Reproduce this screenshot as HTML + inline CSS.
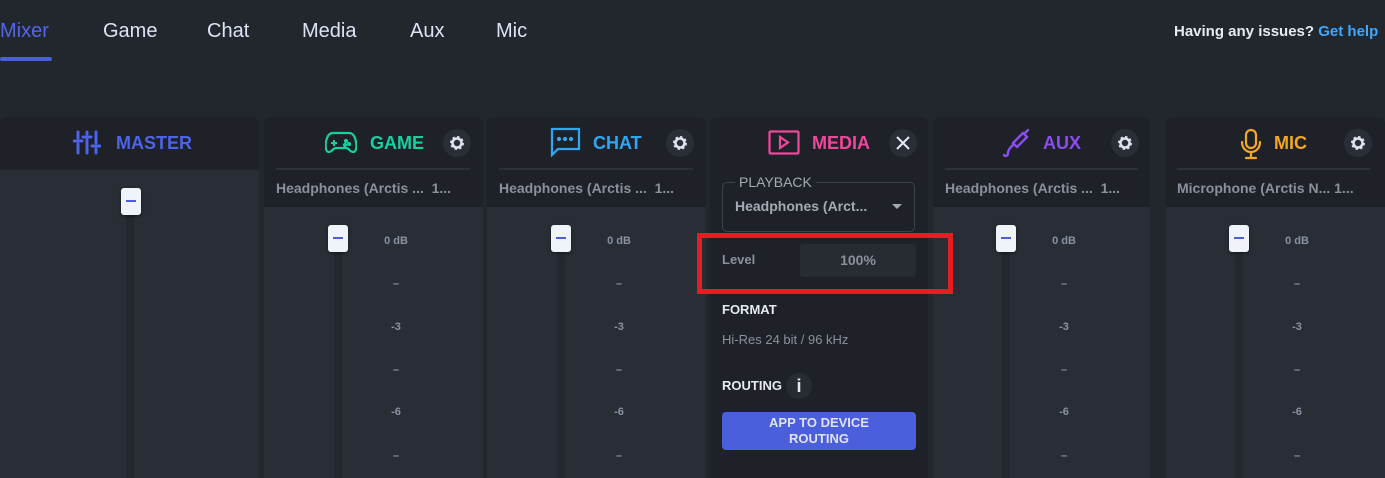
<!DOCTYPE html>
<html><head><style>
*{margin:0;padding:0;box-sizing:border-box}
body{width:1385px;height:478px;background:#22272e;font-family:"Liberation Sans",sans-serif;position:relative;overflow:hidden;color:#dfe3ee}
.a{position:absolute}
.nav{top:20px;font-size:20px;color:#dde3f5}
.hdr{background:#1e2228;border-radius:6px 6px 0 0}
.body{background:#292e36}
.title{font-weight:bold;font-size:18px}
.gear{width:28px;height:28px;border-radius:50%;background:#2a2f37;display:flex;align-items:center;justify-content:center}
.sep{height:2px;background:#2c3139}
.dev{font-weight:bold;font-size:14px;color:#8a909c;white-space:nowrap}
.track{width:8px;background:#23272e}
.thumb{width:20px;height:27px;background:#f1f3fa;border-radius:3px;box-shadow:0 1px 3px rgba(0,0,0,.5)}
.thumb:after{content:"";position:absolute;left:5px;top:12px;width:10px;height:2px;background:#4a5fdc}
.db{font-size:11px;color:#8a92a2;font-weight:bold;width:40px;text-align:center}
</style></head><body>
<div class="a nav" style="left:0;color:#5266e8">Mixer</div>
<div class="a" style="left:0;top:57px;width:52px;height:4px;background:#4a5fdc;border-radius:2px"></div>
<div class="a nav" style="left:103px">Game</div>
<div class="a nav" style="left:207px">Chat</div>
<div class="a nav" style="left:302px">Media</div>
<div class="a nav" style="left:410px">Aux</div>
<div class="a nav" style="left:496px">Mic</div>
<div class="a" style="left:1174px;top:23px;font-size:15px;font-weight:bold;color:#e6e9f2">Having any issues? <span style="color:#3ea7ff">Get help</span></div>

<!-- MASTER -->
<div class="a hdr" style="left:0;top:117px;width:259px;height:54px"></div>
<div class="a body" style="left:0;top:170px;width:259px;height:308px"></div>
<svg class="a" style="left:73px;top:129px" width="28" height="28" viewBox="0 0 28 28" stroke="#4d63e8" stroke-width="3" stroke-linecap="round"><path d="M5 3v6M1 12h8M5 15v9M14 3v2M10 8h8M14 11v13M23 3v11M19 17h8M23 20v4"/></svg>
<div class="a title" style="left:116px;top:133px;color:#4d63e8">MASTER</div>
<div class="a track" style="left:126px;top:214px;height:264px"></div>
<div class="a thumb" style="left:121px;top:188px"></div>

<!-- GAME -->
<div class="a hdr" style="left:264px;top:117px;width:219px;height:91px"></div>
<div class="a body" style="left:264px;top:207px;width:219px;height:271px"></div>
<svg class="a" style="left:325px;top:131px" width="32" height="24" viewBox="0 0 32 24" fill="none" stroke="#14d2a0" stroke-width="2.2"><path d="M8 2h16c4 0 6 3 7 9s0 10-3 10c-3 0-4-4-7-4h-10c-3 0-4 4-7 4s-4-4-3-10S4 2 8 2z"/><path d="M9 9v6M6 12h6" stroke-width="2"/><circle cx="21" cy="10" r="1" fill="#14d2a0"/><circle cx="24" cy="13" r="1" fill="#14d2a0"/><circle cx="20" cy="14" r="1" fill="#14d2a0"/></svg>
<div class="a title" style="left:370px;top:133px;color:#14d2a0">GAME</div>
<div class="a gear" style="left:443px;top:129px"><svg width="16" height="16" viewBox="0 0 16 16"><circle cx="8" cy="8" r="5.5" fill="none" stroke="#dfe3ee" stroke-width="3" stroke-dasharray="2.2 2.1"/><circle cx="8" cy="8" r="4.5" fill="none" stroke="#dfe3ee" stroke-width="2.5"/></svg></div>
<div class="a sep" style="left:276px;top:168px;width:194px"></div>
<div class="a dev" style="left:276px;top:180px">Headphones (Arctis ...&nbsp;&nbsp;1...</div>

<!-- CHAT -->
<div class="a hdr" style="left:487px;top:117px;width:219px;height:91px"></div>
<div class="a body" style="left:487px;top:207px;width:219px;height:271px"></div>
<svg class="a" style="left:549px;top:127px" width="32" height="30" viewBox="0 0 32 30" fill="none" stroke="#2ea8f5" stroke-width="2.2"><path d="M2 2h28v20H9l-6 6V2z"/><circle cx="10" cy="12" r="1" fill="#2ea8f5"/><circle cx="16" cy="12" r="1" fill="#2ea8f5"/><circle cx="22" cy="12" r="1" fill="#2ea8f5"/></svg>
<div class="a title" style="left:593px;top:133px;color:#2ea8f5">CHAT</div>
<div class="a gear" style="left:666px;top:129px"><svg width="16" height="16" viewBox="0 0 16 16"><circle cx="8" cy="8" r="5.5" fill="none" stroke="#dfe3ee" stroke-width="3" stroke-dasharray="2.2 2.1"/><circle cx="8" cy="8" r="4.5" fill="none" stroke="#dfe3ee" stroke-width="2.5"/></svg></div>
<div class="a sep" style="left:499px;top:168px;width:194px"></div>
<div class="a dev" style="left:499px;top:180px">Headphones (Arctis ...&nbsp;&nbsp;1...</div>

<!-- MEDIA -->
<div class="a hdr" style="left:710px;top:117px;width:218px;height:361px"></div>
<svg class="a" style="left:768px;top:130px" width="32" height="26" viewBox="0 0 32 26" fill="none" stroke="#f0479a" stroke-width="2.2"><rect x="1.5" y="1.5" width="29" height="22" rx="1"/><path d="M12 7v11l8-5.5z"/></svg>
<div class="a title" style="left:812px;top:133px;color:#f0479a">MEDIA</div>
<div class="a gear" style="left:889px;top:129px"><svg width="14" height="14" viewBox="0 0 14 14" stroke="#e6e9f2" stroke-width="2"><path d="M1 1l12 12M13 1L1 13"/></svg></div>
<div class="a" style="left:722px;top:182px;width:193px;height:50px;border:1px solid #3c424c;border-radius:5px"></div>
<div class="a" style="left:735px;top:174px;padding:0 4px;background:#1e2228;font-size:14px;color:#a4aab5">PLAYBACK</div>
<div class="a" style="left:735px;top:198px;font-size:14px;font-weight:bold;color:#a4aab5">Headphones (Arct...</div>
<div class="a" style="left:892px;top:204px;border-left:5px solid transparent;border-right:5px solid transparent;border-top:5px solid #a4aab5"></div>
<div class="a" style="left:722px;top:252px;font-size:13px;color:#8a909c;font-weight:bold">Level</div>
<div class="a" style="left:800px;top:244px;width:116px;height:33px;background:#272b32;border-radius:3px;text-align:center;line-height:33px;font-size:14px;font-weight:bold;color:#8a909c">100%</div>
<div class="a" style="left:722px;top:302px;font-size:13px;font-weight:bold;color:#e6e9f2">FORMAT</div>
<div class="a" style="left:722px;top:332px;font-size:13px;color:#8a909c">Hi-Res 24 bit / 96 kHz</div>
<div class="a" style="left:722px;top:378px;font-size:13px;font-weight:bold;color:#e6e9f2">ROUTING</div>
<div class="a" style="left:786px;top:373px;width:26px;height:26px;border-radius:50%;background:#272b32;color:#e6e9f2;font-weight:bold;font-size:18px;text-align:center;line-height:26px">i</div>
<div class="a" style="left:722px;top:412px;width:194px;height:38px;background:#4b5fdc;border-radius:4px;color:#dfe3f5;font-size:13px;font-weight:bold;text-align:center;line-height:16px;padding-top:3px">APP TO DEVICE<br>ROUTING</div>

<!-- AUX -->
<div class="a hdr" style="left:933px;top:117px;width:217px;height:91px"></div>
<div class="a body" style="left:933px;top:207px;width:217px;height:271px"></div>
<svg class="a" style="left:1002px;top:127px" width="30" height="32" viewBox="0 0 30 32" fill="none" stroke="#8b4cf0" stroke-width="2.4" stroke-linecap="round"><path d="M26 3l-4 4M22 7l3 3-10 10-4-4 10-10zM11 18c-3 3-5 5-5 8s-3 4-4 2"/></svg>
<div class="a title" style="left:1043px;top:133px;color:#8b4cf0">AUX</div>
<div class="a gear" style="left:1111px;top:129px"><svg width="16" height="16" viewBox="0 0 16 16"><circle cx="8" cy="8" r="5.5" fill="none" stroke="#dfe3ee" stroke-width="3" stroke-dasharray="2.2 2.1"/><circle cx="8" cy="8" r="4.5" fill="none" stroke="#dfe3ee" stroke-width="2.5"/></svg></div>
<div class="a sep" style="left:945px;top:168px;width:193px"></div>
<div class="a dev" style="left:945px;top:180px">Headphones (Arctis ...&nbsp;&nbsp;1...</div>

<!-- MIC -->
<div class="a hdr" style="left:1166px;top:117px;width:219px;height:91px"></div>
<div class="a body" style="left:1166px;top:207px;width:219px;height:271px"></div>
<svg class="a" style="left:1240px;top:128px" width="22" height="32" viewBox="0 0 22 32" fill="none" stroke="#f5a623" stroke-width="2.2" stroke-linecap="round"><rect x="6" y="2" width="10" height="18" rx="5"/><path d="M2 14c0 6 4 10 9 10s9-4 9-10M11 24v6M6 30h10"/></svg>
<div class="a title" style="left:1274px;top:133px;color:#f5a623">MIC</div>
<div class="a gear" style="left:1344px;top:129px"><svg width="16" height="16" viewBox="0 0 16 16"><circle cx="8" cy="8" r="5.5" fill="none" stroke="#dfe3ee" stroke-width="3" stroke-dasharray="2.2 2.1"/><circle cx="8" cy="8" r="4.5" fill="none" stroke="#dfe3ee" stroke-width="2.5"/></svg></div>
<div class="a sep" style="left:1177px;top:168px;width:194px"></div>
<div class="a dev" style="left:1177px;top:180px">Microphone (Arctis N... 1...</div>

<!-- red highlight on top -->
<div class="a" style="left:697px;top:233px;width:256px;height:61px;border:5px solid #e41e24;z-index:5"></div>

<!-- sliders -->
<div class="a track" style="left:334px;top:250px;height:228px"></div><div class="a thumb" style="left:328px;top:225px"></div>
<div class="a track" style="left:557px;top:250px;height:228px"></div><div class="a thumb" style="left:551px;top:225px"></div>
<div class="a track" style="left:1002px;top:250px;height:228px"></div><div class="a thumb" style="left:996px;top:225px"></div>
<div class="a track" style="left:1235px;top:250px;height:228px"></div><div class="a thumb" style="left:1229px;top:225px"></div>

<!-- dB scales -->
<div class="a db" style="left:376px;top:235px">0 dB</div><div class="a db" style="left:376px;top:278px">–</div><div class="a db" style="left:376px;top:321px">-3</div><div class="a db" style="left:376px;top:364px">–</div><div class="a db" style="left:376px;top:406px">-6</div><div class="a db" style="left:376px;top:450px">–</div>
<div class="a db" style="left:599px;top:235px">0 dB</div><div class="a db" style="left:599px;top:278px">–</div><div class="a db" style="left:599px;top:321px">-3</div><div class="a db" style="left:599px;top:364px">–</div><div class="a db" style="left:599px;top:406px">-6</div><div class="a db" style="left:599px;top:450px">–</div>
<div class="a db" style="left:1044px;top:235px">0 dB</div><div class="a db" style="left:1044px;top:278px">–</div><div class="a db" style="left:1044px;top:321px">-3</div><div class="a db" style="left:1044px;top:364px">–</div><div class="a db" style="left:1044px;top:406px">-6</div><div class="a db" style="left:1044px;top:450px">–</div>
<div class="a db" style="left:1277px;top:235px">0 dB</div><div class="a db" style="left:1277px;top:278px">–</div><div class="a db" style="left:1277px;top:321px">-3</div><div class="a db" style="left:1277px;top:364px">–</div><div class="a db" style="left:1277px;top:406px">-6</div><div class="a db" style="left:1277px;top:450px">–</div>
</body></html>
